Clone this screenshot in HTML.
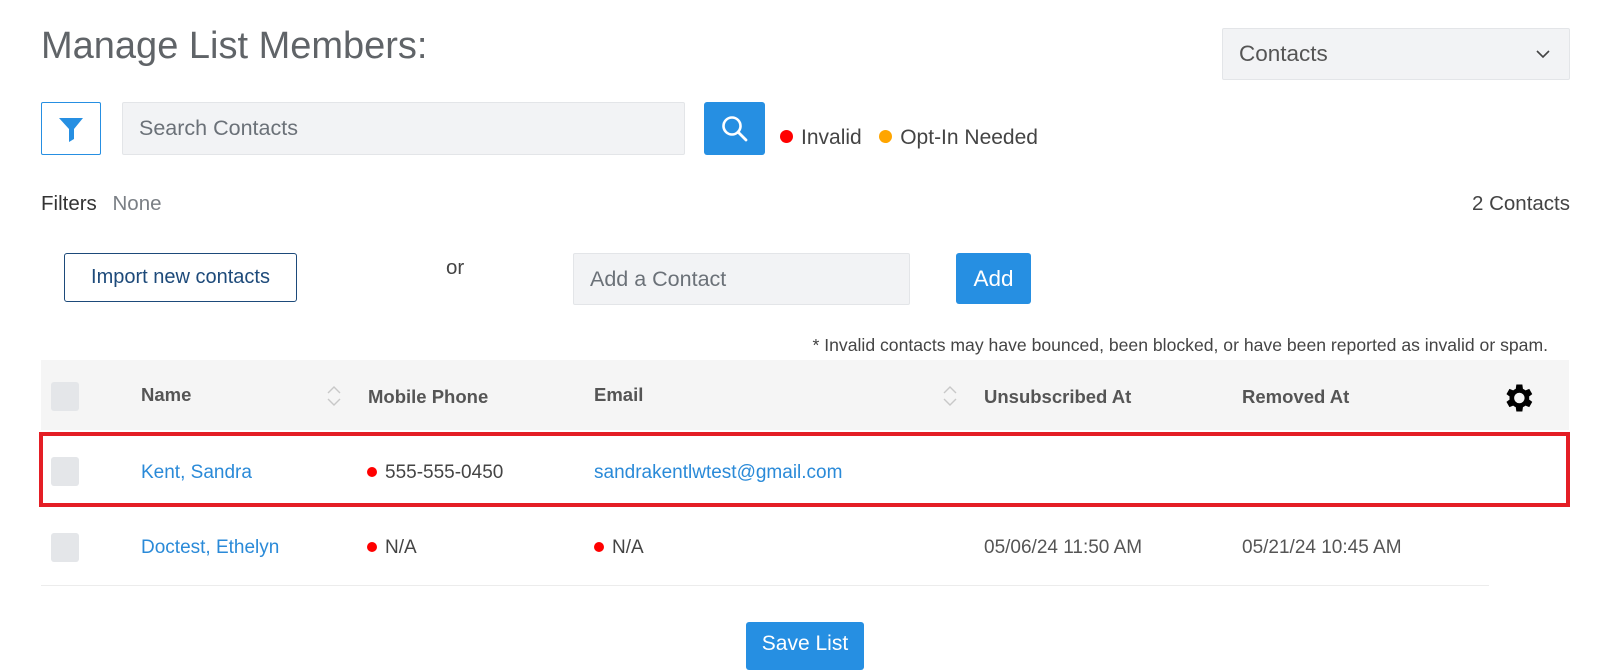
<!DOCTYPE html>
<html><head><meta charset="utf-8"><style>
*{box-sizing:border-box;margin:0;padding:0}
body{width:1607px;height:665px;overflow:hidden;background:#fff;font-family:"Liberation Sans",sans-serif;color:#444;position:relative}
.a{position:absolute;white-space:nowrap}
.inp{position:absolute;background:#f2f3f5;border:1px solid #e3e5e8;border-radius:2px;color:#6b7178;font-size:21.5px;padding-left:16px;display:flex;align-items:center}
.btn{position:absolute;background:#268fe2;border-radius:3px;color:#fff;display:flex;align-items:center;justify-content:center}
.cb{position:absolute;width:28px;height:29px;background:#e4e6e9;border-radius:3px;left:51px}
.dot{display:inline-block;width:10px;height:10px;border-radius:50%;background:#f00;margin-right:8px;vertical-align:1px}
.lnk{color:#2a8ad8}
.rt{font-size:19px}
.hd{font-size:18.5px;color:#555;font-weight:bold}
</style></head><body>
<div class="a" style="left:41px;top:25px;font-size:38px;color:#606468">Manage List Members:</div>
<div class="inp" style="left:1222px;top:28px;width:348px;height:52px;color:#555;font-size:22.5px">Contacts
<svg style="position:absolute;right:18px;top:20px" width="16" height="10" viewBox="0 0 16 10"><path d="M2 2l6 6 6-6" fill="none" stroke="#444" stroke-width="1.6"/></svg></div>

<div class="a" style="left:41px;top:102px;width:60px;height:53px;border:1px solid #268fe2;border-radius:2px">
<svg style="position:absolute;left:16px;top:13px" width="26" height="26" viewBox="0 0 26 26"><path d="M1 2h24L16 13v10l-5 3V13z" fill="#268fe2"/></svg></div>
<div class="inp" style="left:122px;top:102px;width:563px;height:53px">Search Contacts</div>
<div class="btn" style="left:704px;top:102px;width:61px;height:53px">
<svg width="30" height="30" viewBox="0 0 30 30"><circle cx="12" cy="12" r="8.5" fill="none" stroke="#fff" stroke-width="2.6"/><path d="M18 18l8 8" stroke="#fff" stroke-width="2.8" stroke-linecap="round"/></svg></div>
<div class="a" style="left:780px;top:126px;font-size:21px;color:#444"><span class="dot" style="width:13px;height:13px"></span>Invalid&nbsp;&nbsp;&nbsp;<span class="dot" style="width:13px;height:13px;background:#ffa500"></span>Opt-In Needed</div>

<div class="a" style="left:41px;top:192px;font-size:20.5px;color:#333">Filters <span style="color:#7a7f85;margin-left:10px">None</span></div>
<div class="a" style="right:37px;top:192px;font-size:20.5px;color:#444">2 Contacts</div>

<div class="a" style="left:64px;top:253px;width:233px;height:49px;border:1px solid #1d4a7a;border-radius:3px;color:#1d4a7a;font-size:20px;display:flex;align-items:center;justify-content:center">Import new contacts</div>
<div class="a" style="left:446px;top:256px;font-size:20.5px;color:#444">or</div>
<div class="inp" style="left:573px;top:253px;width:337px;height:52px">Add a Contact</div>
<div class="btn" style="left:956px;top:253px;width:75px;height:51px;font-size:22.5px">Add</div>

<div class="a" style="right:59px;top:335px;font-size:17.6px;color:#444">* Invalid contacts may have bounced, been blocked, or have been reported as invalid or spam.</div>

<div class="a" style="left:41px;top:360px;width:1528px;height:70px;background:#f5f5f5"></div>
<div class="cb" style="top:382px"></div>
<div class="a hd" style="left:141px;top:384px">Name</div>
<svg class="a" style="left:326px;top:385px" width="16" height="22" viewBox="0 0 16 22"><path d="M2 8l6-6 6 6M2 14l6 6 6-6" fill="none" stroke="#c8c8c8" stroke-width="1.4"/></svg>
<div class="a hd" style="left:368px;top:386px">Mobile Phone</div>
<div class="a hd" style="left:594px;top:384px">Email</div>
<svg class="a" style="left:942px;top:385px" width="16" height="22" viewBox="0 0 16 22"><path d="M2 8l6-6 6 6M2 14l6 6 6-6" fill="none" stroke="#c8c8c8" stroke-width="1.4"/></svg>
<div class="a hd" style="left:984px;top:386px">Unsubscribed At</div>
<div class="a hd" style="left:1242px;top:386px">Removed At</div>
<svg class="a" style="left:1500px;top:380px" width="36" height="36" viewBox="0 0 24 24"><path fill="#000" d="M19.4 13a7.5 7.5 0 0 0 0-2l2.1-1.6-2-3.5-2.5 1a7.6 7.6 0 0 0-1.7-1L14.9 3h-4l-.4 2.9a7.6 7.6 0 0 0-1.7 1l-2.5-1-2 3.5L6.4 11a7.5 7.5 0 0 0 0 2l-2.1 1.6 2 3.5 2.5-1a7.6 7.6 0 0 0 1.7 1l.4 2.9h4l.4-2.9a7.6 7.6 0 0 0 1.7-1l2.5 1 2-3.5zM12.9 15.5a3.5 3.5 0 1 1 0-7 3.5 3.5 0 0 1 0 7z"/></svg>

<div class="a" style="left:39px;top:432px;width:1531px;height:75px;border:4px solid #e41e25"></div>
<div class="cb" style="top:457px"></div>
<div class="a rt lnk" style="left:141px;top:462px">Kent, Sandra</div>
<div class="a rt" style="left:367px;top:462px"><span class="dot"></span>555-555-0450</div>
<div class="a rt lnk" style="left:594px;top:462px">sandrakentlwtest@gmail.com</div>

<div class="cb" style="top:533px"></div>
<div class="a rt lnk" style="left:141px;top:537px">Doctest, Ethelyn</div>
<div class="a rt" style="left:367px;top:537px"><span class="dot"></span>N/A</div>
<div class="a rt" style="left:594px;top:537px"><span class="dot"></span>N/A</div>
<div class="a rt" style="left:984px;top:537px;color:#555">05/06/24 11:50 AM</div>
<div class="a rt" style="left:1242px;top:537px;color:#555">05/21/24 10:45 AM</div>
<div class="a" style="left:41px;top:585px;width:1448px;height:1px;background:#ececec"></div>

<div class="btn" style="left:746px;top:622px;width:118px;height:48px;font-size:21px;padding-bottom:4px">Save List</div>
</body></html>
